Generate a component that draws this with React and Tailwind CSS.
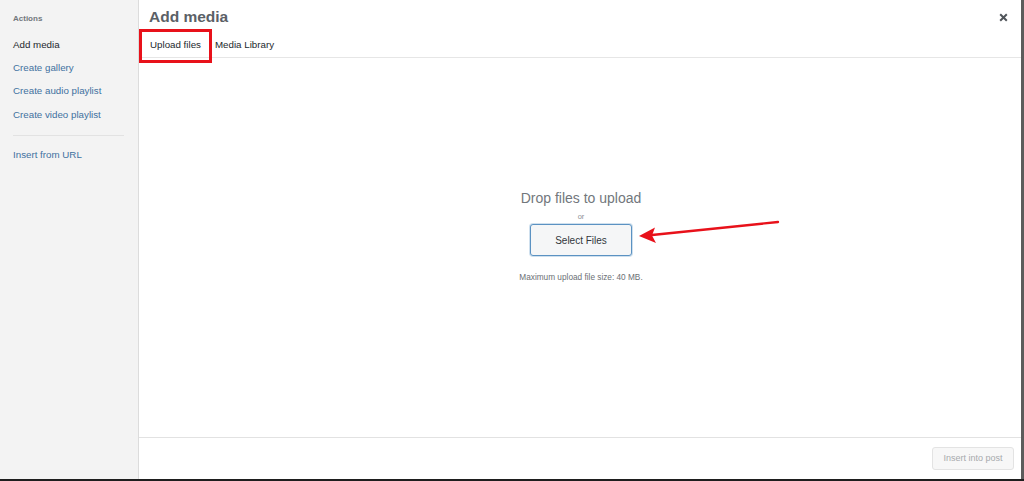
import React from "react";

const FONT = { fontFamily: '"Liberation Sans", Arial, sans-serif' };

const ACTIONS = [
  { label: "Add media", active: true },
  { label: "Create gallery" },
  { label: "Create audio playlist" },
  { label: "Create video playlist" },
];

function Sidebar() {
  return (
    <aside className="w-[139px] shrink-0 bg-[#f3f3f3] border-r border-[#dcdcdc] pl-[13px] pr-[14px] pt-[14px]">
      <h3 className="text-[8px] font-bold text-[#72777c] leading-[10px]">Actions</h3>
      <ul className="mt-[15px] flex flex-col gap-[12.2px] text-[9.75px] leading-[11px]">
        {ACTIONS.map((a) => (
          <li
            key={a.label}
            className={a.active ? "text-[#23282d]" : "text-[#3f71a0]"}
          >
            {a.label}
          </li>
        ))}
      </ul>
      <div className="mt-[15px] border-t border-[#e2e2e2]" />
      <p className="mt-[13px] text-[9.75px] leading-[11px] text-[#3f71a0]">Insert from URL</p>
    </aside>
  );
}

function Arrow() {
  return (
    <svg
      className="absolute left-[636px] top-[218px]"
      width="146"
      height="28"
      viewBox="0 0 146 28"
    >
      <path d="M142 4 L16 17" stroke="#e8111a" strokeWidth="2.4" strokeLinecap="round" />
      <path d="M3 18 L19 9.5 L16 17.5 L20 25 Z" fill="#e8111a" />
    </svg>
  );
}

export default function App() {
  return (
    <div className="w-[1024px] h-[481px] bg-[#1e1e1e] overflow-hidden" style={FONT}>
      <div className="relative flex w-[1024px] h-[479px] bg-white border-r-[3px] border-[#5c5c5c]">
        <Sidebar />

        <main className="flex flex-1 flex-col">
          {/* header + tabs */}
          <div className="h-[58px] border-b border-[#e6e6e6] pl-[10px] pr-[10px]">
            <div className="flex items-center justify-between pt-[8px]">
              <h1 className="text-[15.5px] font-bold leading-[18px] text-[#5b6066]">Add media</h1>
              <svg width="9" height="9" viewBox="0 0 9 9" className="mr-[3px] mt-[1px]">
                <path d="M1.2 1.2 L7.8 7.8 M7.8 1.2 L1.2 7.8" stroke="#50555a" strokeWidth="2" />
              </svg>
            </div>
            <nav className="mt-[13px] flex gap-[14px] text-[9.75px] leading-[11px] text-[#23282d]">
              <span className="pl-[1px]">Upload files</span>
              <span>Media Library</span>
            </nav>
          </div>

          {/* uploader */}
          <section className="flex flex-1 flex-col items-center pt-[132px] pl-[2px]">
            <p className="text-[14px] leading-[17px] text-[#72777c]">Drop files to upload</p>
            <p className="mt-[5px] text-[7.5px] leading-[9px] text-[#8c8f94]">or</p>
            <button className="mt-[3px] h-[32px] w-[102px] rounded-[3px] border border-[#5b92c2] bg-[#f5f6f7] text-[10px] text-[#32373c] shadow-[0_0_0_1px_#cfe0ee]">
              Select Files
            </button>
            <p className="mt-[17px] text-[8.25px] leading-[10px] text-[#6c7075]">
              Maximum upload file size: 40 MB.
            </p>
          </section>

          {/* footer */}
          <footer className="flex h-[42px] items-center justify-end border-t border-[#e2e2e2] pr-[7px]">
            <button className="h-[23px] w-[82px] rounded-[3px] border border-[#e3e3e3] bg-[#f7f7f7] text-[9px] text-[#a7aaad]">
              Insert into post
            </button>
          </footer>
        </main>

        {/* annotations */}
        <div className="absolute left-[139px] top-[29px] h-[34px] w-[73px] border-[3px] border-[#e8111a]" />
        <Arrow />
      </div>
    </div>
  );
}
